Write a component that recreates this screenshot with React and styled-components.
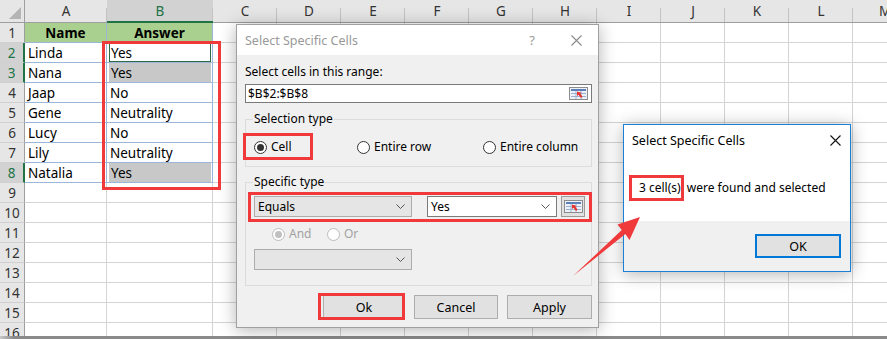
import React from 'react'
import styled, { createGlobalStyle } from 'styled-components'

const GlobalStyle = createGlobalStyle`
  html, body { margin: 0; padding: 0; background: #fff; }
  body { font-family: "Noto Sans", "Liberation Sans", sans-serif; }
`

const RED = '#f0393b'

const Stage = styled.div`
  position: relative;
  width: 887px;
  height: 339px;
  overflow: hidden;
  background: #fff;
`

const Sheet = styled.div`
  display: grid;
  grid-template-columns: 25px 82px 106px repeat(11, 64px);
  grid-template-rows: 23px;
  grid-auto-rows: 20px;
  height: 336px;
  overflow: hidden;
  font-family: "Noto Sans", "Liberation Sans", sans-serif;
`

const BottomBar = styled.div`
  height: 3px;
  background: linear-gradient(90deg, #c8c8c8 0, #8a8a8a 14px, #8a8a8a 100%);
`

const Corner = styled.div`
  position: relative;
  background: #e6e6e6;
  border-right: 1px solid #9e9e9e;
  border-bottom: 1px solid #9e9e9e;
  box-sizing: border-box;
  &::after {
    content: '';
    position: absolute;
    right: 3px;
    bottom: 3px;
    border-style: solid;
    border-width: 0 0 12px 12px;
    border-color: transparent transparent #b4b4b4 transparent;
  }
`

const ColHead = styled.div`
  position: relative;
  box-sizing: border-box;
  background: ${p => (p.$selected ? '#d2d2d2' : '#e6e6e6')};
  border-bottom: ${p => (p.$selected ? '2px solid #217346' : '1px solid #9e9e9e')};
  font-size: 13.5px;
  line-height: 22px;
  text-align: center;
  color: ${p => (p.$selected ? '#217346' : '#333')};
  &::after {
    content: '';
    position: absolute;
    right: 0;
    top: 8px;
    bottom: 0;
    width: 1px;
    background: #c3c3c3;
  }
`

const RowHead = styled.div`
  box-sizing: border-box;
  background: ${p => (p.$selected ? '#d2d2d2' : '#e6e6e6')};
  color: ${p => (p.$selected ? '#217346' : '#333')};
  border-right: ${p => (p.$selected ? '2px solid #217346' : '1px solid #9e9e9e')};
  border-bottom: 1px solid #d0d0d0;
  font-size: 13.5px;
  line-height: 20px;
  text-align: center;
`

const Cell = styled.div`
  box-sizing: border-box;
  border-right: 1px solid ${p => (p.$data ? '#9cb6da' : '#d4d4d4')};
  border-bottom: 1px solid ${p => (p.$data ? '#9cb6da' : '#d4d4d4')};
  background: ${p => (p.$title ? '#a9d08e' : '#fff')};
  font-size: 13.5px;
  font-weight: ${p => (p.$title ? 700 : 400)};
  line-height: 20px;
  text-align: ${p => (p.$title ? 'center' : 'left')};
  padding-left: ${p => (p.$title ? 0 : 3)}px;
  color: #000;
  white-space: nowrap;
  overflow: hidden;
`

const Mark = styled.div`
  box-sizing: border-box;
  height: 19px;
  margin: 0 1px 0 -1px;
  padding-left: 1px;
  line-height: 18px;
  background: ${p => (p.$active ? '#fff' : '#c8c8c8')};
  border: 1px solid ${p => (p.$active ? '#2f6a48' : '#c8c8c8')};
`

const Window = styled.div`
  position: absolute;
  left: ${p => p.$left}px;
  top: ${p => p.$top}px;
  width: ${p => p.$width}px;
  height: ${p => p.$height}px;
  box-sizing: border-box;
  display: flex;
  flex-direction: column;
  background: #f0f0f0;
  border: 1px solid ${p => (p.$active ? '#1a7fd6' : '#a0a0a0')};
  box-shadow: 0 2px 16px rgba(0, 0, 0, 0.3);
  font-size: 12px;
  color: #000;
`

const TitleBar = styled.div`
  height: 30px;
  flex-shrink: 0;
  display: flex;
  align-items: center;
  background: #fff;
  padding-left: 8px;
`

const TitleText = styled.span`
  flex: 1;
  color: ${p => (p.$active ? '#000' : '#999')};
  font-size: 12.5px;
`

const TitleButton = styled.span`
  width: ${p => p.$w}px;
  height: 30px;
  display: flex;
  align-items: center;
  justify-content: center;
  color: ${p => (p.$active ? '#000' : '#999')};
  font-size: 13px;
`

const Body = styled.div`
  padding: 0 6px 0 8px;
  display: flex;
  flex-direction: column;
`

const Label = styled.div`
  margin-top: 9px;
  line-height: 16px;
`

const RangeInput = styled.div`
  margin-top: 4px;
  height: 19px;
  box-sizing: border-box;
  background: #fff;
  border: 1px solid #7a7a7a;
  display: flex;
  align-items: center;
  justify-content: space-between;
  padding: 0 3px 0 2px;
  line-height: 16px;
`

const Group = styled.fieldset`
  margin: ${p => p.$gap}px 0 0;
  padding: 0;
  min-width: 0;
  border: 1px solid #dcdcdc;
  & > legend {
    margin-left: 7px;
    padding: 0 1px;
    line-height: 16px;
  }
`

const RadioRow = styled.div`
  display: grid;
  grid-template-columns: ${p => p.$cols};
  padding-left: ${p => p.$indent}px;
  margin: ${p => p.$margin};
  height: 16px;
  align-items: center;
`

const RadioItem = styled.label`
  display: flex;
  align-items: center;
  gap: 4px;
  line-height: 16px;
  color: ${p => (p.$disabled ? '#a2a2a2' : '#000')};
`

const RadioDot = styled.span`
  width: 13px;
  height: 13px;
  box-sizing: border-box;
  border-radius: 50%;
  border: 1px solid ${p => (p.$disabled ? '#bcbcbc' : '#333')};
  background: #fff;
  display: inline-flex;
  align-items: center;
  justify-content: center;
  &::after {
    content: '';
    width: 7px;
    height: 7px;
    border-radius: 50%;
    background: ${p => (p.$disabled ? '#c0c0c0' : '#333')};
    display: ${p => (p.$checked ? 'block' : 'none')};
  }
`

const ComboRow = styled.div`
  display: flex;
  align-items: center;
  margin: ${p => p.$margin};
  padding-left: 8px;
`

const Combo = styled.div`
  width: ${p => p.$w}px;
  height: 21px;
  box-sizing: border-box;
  margin-right: ${p => p.$gap || 0}px;
  background: ${p => (p.$white ? '#fff' : '#e5e5e5')};
  border: 1px solid ${p => (p.$white ? '#7a7a7a' : '#acacac')};
  display: flex;
  align-items: center;
  justify-content: space-between;
  padding: 0 6px 0 3px;
  line-height: 16px;
`

const PickButton = styled.div`
  width: 24px;
  height: 21px;
  box-sizing: border-box;
  border: 1px solid #9a9a9a;
  background: #e1e1e1;
  display: flex;
  align-items: center;
  justify-content: center;
`

const ButtonRow = styled.div`
  display: flex;
  justify-content: flex-end;
  gap: 9px;
  margin-top: ${p => p.$gap}px;
`

const Button = styled.div`
  width: ${p => p.$w}px;
  height: ${p => p.$h || 24}px;
  box-sizing: border-box;
  background: #e1e1e1;
  border: ${p => (p.$default ? '2px solid #0078d7' : '1px solid #adadad')};
  display: flex;
  align-items: center;
  justify-content: center;
  font-size: 12.5px;
`

const MessageBody = styled.div`
  height: 66px;
  background: #fff;
  display: flex;
  align-items: center;
  padding-left: 5px;
  font-size: 12px;
  line-height: 16px;
  white-space: pre;
`

const Boxed = styled.span`
  display: inline-block;
  border: 3px solid ${RED};
  padding: 2px 0 2px 7px;
`

const Footer = styled.div`
  flex: 1;
  display: flex;
  justify-content: flex-end;
  align-items: flex-start;
  padding: 13px 9px 0 0;
`

const Highlight = styled.div`
  position: absolute;
  left: ${p => p.$x}px;
  top: ${p => p.$y}px;
  width: ${p => p.$w}px;
  height: ${p => p.$h}px;
  box-sizing: border-box;
  border: 3px solid ${RED};
  pointer-events: none;
`

const ArrowSvg = styled.svg`
  position: absolute;
  left: 0;
  top: 0;
  pointer-events: none;
`

const CloseIcon = ({ color }) => (
  <svg width="11" height="11" viewBox="0 0 11 11">
    <path d="M0.5 0.5 L10.5 10.5 M10.5 0.5 L0.5 10.5" stroke={color} strokeWidth="1.1" fill="none" />
  </svg>
)

const Chevron = () => (
  <svg width="9" height="5" viewBox="0 0 9 5">
    <path d="M0.5 0.5 L4.5 4.5 L8.5 0.5" stroke="#555" strokeWidth="1" fill="none" />
  </svg>
)

const RangeIcon = () => (
  <svg width="19" height="13" viewBox="0 0 19 13">
    <rect x="0.5" y="0.5" width="18" height="12" fill="#eef2f8" stroke="#8c8c8c" />
    <rect x="2" y="2" width="15" height="2" fill="#5b7fb8" />
    <path d="M2 6.5 H17 M2 9.5 H17 M7 4 V12 M12 4 V12" stroke="#9bb1d4" strokeWidth="1" />
    <path d="M8 4.5 L8 9 L9.5 7.8 L12 11 L13.6 9.8 L11.2 6.6 L13 6 Z" fill="#e8322c" />
  </svg>
)

const columns = ['A', 'B', 'C', 'D', 'E', 'F', 'G', 'H', 'I', 'J', 'K', 'L', 'M']

const rows = [
  ['Name', 'Answer'],
  ['Linda', 'Yes'],
  ['Nana', 'Yes'],
  ['Jaap', 'No'],
  ['Gene', 'Neutrality'],
  ['Lucy', 'No'],
  ['Lily', 'Neutrality'],
  ['Natalia', 'Yes'],
]

const selectedRows = [2, 3, 8]

const Spreadsheet = () => {
  const cells = []
  cells.push(<Corner key="corner" />)
  columns.forEach(c => cells.push(<ColHead key={c} $selected={c === 'B'}>{c}</ColHead>))
  for (let r = 1; r <= 16; r++) {
    cells.push(
      <RowHead key={'r' + r} $selected={selectedRows.includes(r)}>
        {r}
      </RowHead>
    )
    const data = rows[r - 1]
    columns.forEach((c, ci) => {
      const key = c + r
      if (data && ci < 2) {
        const text = data[ci]
        let content = text
        if (ci === 1 && r === 2) content = <Mark $active>{text}</Mark>
        if (ci === 1 && (r === 3 || r === 8)) content = <Mark>{text}</Mark>
        cells.push(
          <Cell key={key} $data $title={r === 1}>
            {content}
          </Cell>
        )
      } else {
        cells.push(<Cell key={key} />)
      }
    })
  }
  return <Sheet>{cells}</Sheet>
}

const SelectDialog = () => (
  <Window $left={236} $top={24} $width={363} $height={304}>
    <TitleBar>
      <TitleText>Select Specific Cells</TitleText>
      <TitleButton $w={44}>?</TitleButton>
      <TitleButton $w={44}>
        <CloseIcon color="#8a8a8a" />
      </TitleButton>
    </TitleBar>
    <Body>
      <Label>Select cells in this range:</Label>
      <RangeInput>
        <span>$B$2:$B$8</span>
        <RangeIcon />
      </RangeInput>
      <Group $gap={8}>
        <legend>Selection type</legend>
        <RadioRow $cols="103px 126px 1fr" $indent={8} $margin="12px 0 11px">
          <RadioItem>
            <RadioDot $checked />
            Cell
          </RadioItem>
          <RadioItem>
            <RadioDot />
            Entire row
          </RadioItem>
          <RadioItem>
            <RadioDot />
            Entire column
          </RadioItem>
        </RadioRow>
      </Group>
      <Group $gap={7}>
        <legend>Specific type</legend>
        <ComboRow $margin="6px 0 0">
          <Combo $w={158} $gap={15}>
            <span>Equals</span>
            <Chevron />
          </Combo>
          <Combo $w={130} $white $gap={4}>
            <span>Yes</span>
            <Chevron />
          </Combo>
          <PickButton>
            <RangeIcon />
          </PickButton>
        </ComboRow>
        <RadioRow $cols="55px 1fr" $indent={26} $margin="9px 0 0">
          <RadioItem $disabled>
            <RadioDot $disabled $checked />
            And
          </RadioItem>
          <RadioItem $disabled>
            <RadioDot $disabled />
            Or
          </RadioItem>
        </RadioRow>
        <ComboRow $margin="7px 0 15px">
          <Combo $w={158}>
            <span />
            <Chevron />
          </Combo>
        </ComboRow>
      </Group>
      <ButtonRow $gap={9}>
        <Button $w={82}>Ok</Button>
        <Button $w={84}>Cancel</Button>
        <Button $w={85}>Apply</Button>
      </ButtonRow>
    </Body>
  </Window>
)

const ResultDialog = () => (
  <Window $left={623} $top={124} $width={228} $height={148} $active>
    <TitleBar>
      <TitleText $active>Select Specific Cells</TitleText>
      <TitleButton $w={30} $active>
        <CloseIcon color="#111" />
      </TitleButton>
    </TitleBar>
    <MessageBody>
      <Boxed>3 cell(s)</Boxed>{' were found and selected'}
    </MessageBody>
    <Footer>
      <Button $w={86} $h={24} $default>
        OK
      </Button>
    </Footer>
  </Window>
)

const App = () => (
  <>
    <GlobalStyle />
    <Stage>
      <Spreadsheet />
      <BottomBar />
      <SelectDialog />
      <ResultDialog />
      <Highlight $x={102} $y={41} $w={119} $h={149} />
      <Highlight $x={243} $y={133} $w={70} $h={27} />
      <Highlight $x={248} $y={192} $w={344} $h={30} />
      <Highlight $x={318} $y={293} $w={87} $h={27} />
      <ArrowSvg width="887" height="339" viewBox="0 0 887 339">
        <polygon
          points="640,217 617.5,224.5 621.8,230 573,276 625.3,234 629.5,240"
          fill={RED}
        />
      </ArrowSvg>
    </Stage>
  </>
)

export default App
